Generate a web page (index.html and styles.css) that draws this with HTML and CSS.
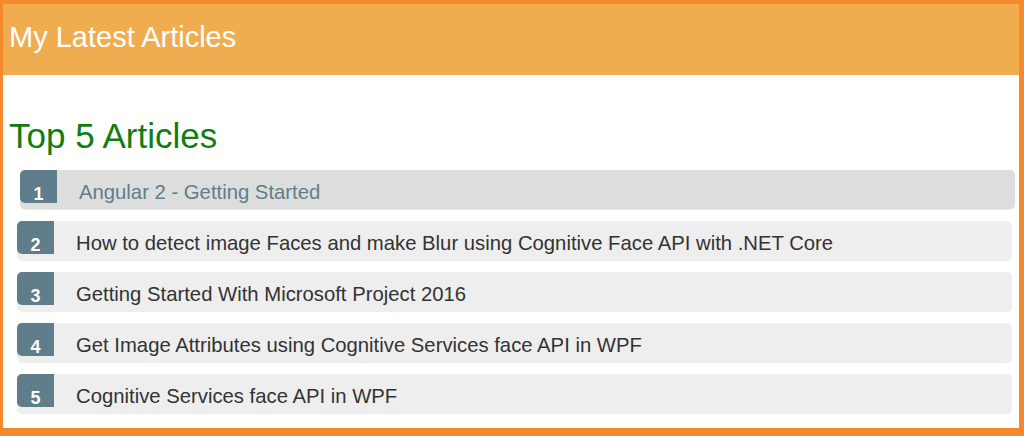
FILE: index.html
```html
<!DOCTYPE html>
<html lang="en">
<head>
    <meta charset="UTF-8">
    <meta name="viewport" content="width=device-width, initial-scale=1.0">
    <title>My Latest Articles</title>
    <link rel="stylesheet" href="styles.css">
</head>
<body>
    <div class="page">
        <div class="header">
            <h1>My Latest Articles</h1>
        </div>

        <div class="content">
            <h2>Top 5 Articles</h2>

            <ul class="articles">
                <li class="article active">
                    <span class="badge">1</span>
                    <span class="title">Angular 2 - Getting Started</span>
                </li>
                <li class="article">
                    <span class="badge">2</span>
                    <span class="title">How to detect image Faces and make Blur using Cognitive Face API with .NET Core</span>
                </li>
                <li class="article">
                    <span class="badge">3</span>
                    <span class="title">Getting Started With Microsoft Project 2016</span>
                </li>
                <li class="article">
                    <span class="badge">4</span>
                    <span class="title">Get Image Attributes using Cognitive Services face API in WPF</span>
                </li>
                <li class="article">
                    <span class="badge">5</span>
                    <span class="title">Cognitive Services face API in WPF</span>
                </li>
            </ul>
        </div>
    </div>
</body>
</html>
```

FILE: styles.css
```css
body {
    margin: 0;
    font-family: "Liberation Sans", Arial, sans-serif;
    background-color: white;
}

.page {
    height: 436px;
    box-sizing: border-box;
    border-style: solid;
    border-color: #f7892d;
    border-width: 4px 5px 8px 3px;
    overflow: hidden;
}

.header {
    background-color: #efad4f;
    padding: 17px 9px 21px 6px;
}

.header h1 {
    margin: 0;
    font-size: 29px;
    font-weight: normal;
    color: white;
}

.content {
    padding: 41px 7px 0 6px;
}

.content h2 {
    margin: 0 0 14px 0;
    font-size: 35px;
    font-weight: normal;
    color: #117d11;
}

.articles {
    list-style: none;
    margin: 0 0 0 8px;
    padding: 0;
    display: flex;
    flex-direction: column;
    gap: 12px;
}

.article {
    display: flex;
    align-items: center;
    height: 39px;
    background-color: #eeeeee;
    border-radius: 5px;
    box-shadow: 0 1px 1px rgba(0,0,0,0.08);
    color: #333;
    font-size: 20.3px;
}

.article.active {
    margin-left: 3px;
    margin-right: -3px;
    background-color: #dddddd;
    color: #607d8b;
}

.badge {
    align-self: flex-start;
    display: flex;
    align-items: flex-end;
    justify-content: center;
    box-sizing: border-box;
    width: 37px;
    height: 33px;
    margin-right: 22px;
    background-color: #607d8b;
    border-radius: 5px 0 0 5px;
    color: white;
    font-size: 18px;
    font-weight: bold;
    line-height: 1;
}

.title {
    padding-top: 5px;
}
```
